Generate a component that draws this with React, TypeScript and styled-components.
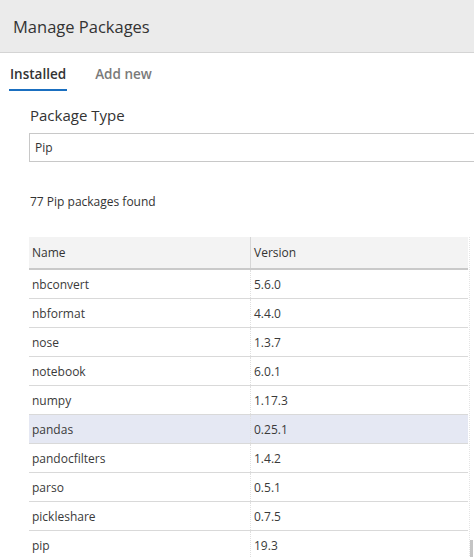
import React from 'react';
import styled, {createGlobalStyle} from "styled-components";

type PackageType = {
    name: string;
    version: string;
    selected?: boolean;
}

const packages: PackageType[] = [
    {name: "nbconvert", version: "5.6.0"},
    {name: "nbformat", version: "4.4.0"},
    {name: "nose", version: "1.3.7"},
    {name: "notebook", version: "6.0.1"},
    {name: "numpy", version: "1.17.3"},
    {name: "pandas", version: "0.25.1", selected: true},
    {name: "pandocfilters", version: "1.4.2"},
    {name: "parso", version: "0.5.1"},
    {name: "pickleshare", version: "0.7.5"},
    {name: "pip", version: "19.3"},
]

const GlobalStyle = createGlobalStyle`
  body {
    margin: 0;
    background: #ffffff;
    font-family: "Open Sans", "Noto Sans", sans-serif;
    color: #3a3a3a;
  }
`

export default function App() {
    return (
        <>
            <GlobalStyle/>
            <StyledPage>
                <Header>
                    <Title>Manage Packages</Title>
                </Header>
                <Tabs>
                    <Tab active>Installed</Tab>
                    <Tab>Add new</Tab>
                </Tabs>
                <Content>
                    <Label>Package Type</Label>
                    <SelectBox>Pip</SelectBox>
                    <Count>77 Pip packages found</Count>
                    <TableArea>
                        <Table>
                            <HeaderRow>
                                <HeaderCell>Name</HeaderCell>
                                <HeaderCell divider>Version</HeaderCell>
                            </HeaderRow>
                            {packages.map(p => (
                                <Row key={p.name} selected={p.selected}>
                                    <Cell>{p.name}</Cell>
                                    <Cell divider>{p.version}</Cell>
                                </Row>
                            ))}
                        </Table>
                        <ScrollTrack>
                            <ScrollThumb/>
                        </ScrollTrack>
                    </TableArea>
                </Content>
            </StyledPage>
        </>
    );
}

const StyledPage = styled.div`
  width: 474px;
  height: 557px;
  overflow: hidden;
`
const Header = styled.div`
  height: 52px;
  background-color: #ebebeb;
  border-bottom: 1px solid #d4d4d4;
  display: flex;
  align-items: center;
  padding-left: 13px;
`
const Title = styled.h1`
  margin: 0;
  font-size: 16.5px;
  font-weight: 400;
  color: #333333;
`
const Tabs = styled.div`
  display: flex;
  gap: 27px;
  padding: 0 9px;
  margin-top: 9px;
`
type TabPropsType = {
    active?: boolean;
}
const Tab = styled.div<TabPropsType>`
  font-size: 13.5px;
  font-weight: 600;
  line-height: 19px;
  padding: 3px 1px 5px;
  color: ${props => props.active ? "#333333" : "#7a7a7a"};
  border-bottom: 2px solid ${props => props.active ? "#1a6fc0" : "transparent"};
`
const Content = styled.div`
  padding-left: 29px;
  margin-top: 13px;
`
const Label = styled.div`
  font-size: 15px;
  line-height: 22px;
  color: #333333;
  padding-left: 1px;
`
const SelectBox = styled.div`
  margin-top: 7px;
  width: 460px;
  height: 27px;
  border: 1px solid #c8c8c8;
  font-size: 12px;
  line-height: 27px;
  padding-left: 5px;
  color: #333333;
`
const Count = styled.div`
  margin-top: 32px;
  font-size: 12px;
  line-height: 16px;
  color: #333333;
  padding-left: 1px;
`
const TableArea = styled.div`
  margin-top: 27px;
  display: flex;
`
const Table = styled.div`
  width: 441px;
  display: flex;
  flex-direction: column;
`
const HeaderRow = styled.div`
  display: grid;
  grid-template-columns: 221px 1fr;
  height: 31px;
  background-color: #f3f3f3;
  border-bottom: 2px solid #c9c9c9;
`
type CellPropsType = {
    divider?: boolean;
}
const HeaderCell = styled.div<CellPropsType>`
  display: flex;
  align-items: center;
  padding-left: 3px;
  font-size: 12px;
  color: #333333;
  border-left: ${props => props.divider ? "1px solid #d6d6d6" : "none"};
`
type RowPropsType = {
    selected?: boolean;
}
const Row = styled.div<RowPropsType>`
  display: grid;
  grid-template-columns: 221px 1fr;
  height: 28px;
  border-bottom: 1px solid #d9d9d9;
  background-color: ${props => props.selected ? "#e5e8f3" : "#ffffff"};
`
const Cell = styled.div<CellPropsType>`
  display: flex;
  align-items: center;
  padding-left: 3px;
  font-size: 12px;
  color: #3a3a3a;
  border-left: ${props => props.divider ? "1px dotted #e0e0e0" : "none"};
`
const ScrollTrack = styled.div`
  width: 4px;
  margin-left: 1px;
  border-left: 1px dotted #e4e4e4;
  display: flex;
  flex-direction: column;
  justify-content: flex-end;
`
const ScrollThumb = styled.div`
  width: 3px;
  height: 20px;
  background-color: #c4c4c4;
`
